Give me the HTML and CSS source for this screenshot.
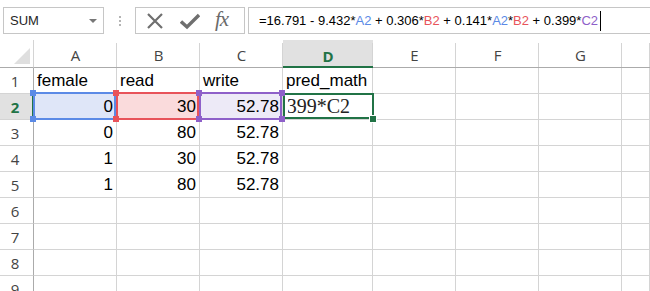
FILE: index.html
```html
<!DOCTYPE html>
<html lang="en">
<head>
    <meta charset="UTF-8">
    <title>Sheet</title>
    <link rel="stylesheet" href="styles.css">
</head>
<body>
    <!-- Formula bar -->
    <div class="formula-bar">
        <div class="name-box">
            <span>SUM</span>
            <span class="name-arrow"></span>
        </div>
        <div class="grip"><i></i><i></i><i></i></div>
        <div class="fx-buttons">
            <svg class="fx-icon" width="18" height="18" viewBox="0 0 18 18">
                <path d="M2 2 L16 16 M16 2 L2 16" stroke="#6f6f6f" stroke-width="2.2" fill="none"/>
            </svg>
            <svg class="fx-icon" width="20" height="18" viewBox="0 0 20 18">
                <path d="M1 9.5 L7 15 L19 3" stroke="#6f6f6f" stroke-width="3.4" fill="none"/>
            </svg>
            <span class="fx-label">fx</span>
        </div>
        <div class="formula-input">
            <span>=16.791 - 9.432*<b class="ref-a">A2</b> + 0.306*<b class="ref-b">B2</b> + 0.141*<b class="ref-a">A2</b>*<b class="ref-b">B2</b> + 0.399*<b class="ref-c">C2</b></span>
            <span class="caret"></span>
        </div>
    </div>

    <!-- Grid -->
    <div class="sheet">
        <div class="corner"><span class="corner-tri"></span></div>
        <div class="col-head">A</div>
        <div class="col-head">B</div>
        <div class="col-head">C</div>
        <div class="col-head active">D</div>
        <div class="col-head">E</div>
        <div class="col-head">F</div>
        <div class="col-head">G</div>
        <div class="col-head"></div>

        <div class="row-head">1</div>
        <div class="cell">female</div>
        <div class="cell">read</div>
        <div class="cell">write</div>
        <div class="cell">pred_math</div>
        <div class="cell"></div><div class="cell"></div><div class="cell"></div><div class="cell"></div>

        <div class="row-head active">2</div>
        <div class="cell num sel sel-a">0<span class="h tl"></span><span class="h tr"></span><span class="h bl"></span><span class="h br"></span></div>
        <div class="cell num sel sel-b">30<span class="h tl"></span><span class="h tr"></span><span class="h bl"></span><span class="h br"></span></div>
        <div class="cell num sel sel-c">52.78<span class="h tl"></span><span class="h tr"></span><span class="h bl"></span><span class="h br"></span></div>
        <div class="cell editing">
            <div class="edit-clip"><span class="edit-text">=16.791 - 9.432*A2 + 0.306*B2 + 0.141*A2*B2 + 0.399*C2</span></div>
            <span class="fill-handle"></span>
        </div>
        <div class="cell"></div><div class="cell"></div><div class="cell"></div><div class="cell"></div>

        <div class="row-head">3</div>
        <div class="cell num">0</div>
        <div class="cell num">80</div>
        <div class="cell num">52.78</div>
        <div class="cell"></div><div class="cell"></div><div class="cell"></div><div class="cell"></div><div class="cell"></div>

        <div class="row-head">4</div>
        <div class="cell num">1</div>
        <div class="cell num">30</div>
        <div class="cell num">52.78</div>
        <div class="cell"></div><div class="cell"></div><div class="cell"></div><div class="cell"></div><div class="cell"></div>

        <div class="row-head">5</div>
        <div class="cell num">1</div>
        <div class="cell num">80</div>
        <div class="cell num">52.78</div>
        <div class="cell"></div><div class="cell"></div><div class="cell"></div><div class="cell"></div><div class="cell"></div>

        <div class="row-head">6</div>
        <div class="cell"></div><div class="cell"></div><div class="cell"></div><div class="cell"></div><div class="cell"></div><div class="cell"></div><div class="cell"></div><div class="cell"></div>

        <div class="row-head">7</div>
        <div class="cell"></div><div class="cell"></div><div class="cell"></div><div class="cell"></div><div class="cell"></div><div class="cell"></div><div class="cell"></div><div class="cell"></div>

        <div class="row-head">8</div>
        <div class="cell"></div><div class="cell"></div><div class="cell"></div><div class="cell"></div><div class="cell"></div><div class="cell"></div><div class="cell"></div><div class="cell"></div>

        <div class="row-head">9</div>
        <div class="cell"></div><div class="cell"></div><div class="cell"></div><div class="cell"></div><div class="cell"></div><div class="cell"></div><div class="cell"></div><div class="cell"></div>
    </div>
</body>
</html>
```

FILE: styles.css
```css
* {
    margin: 0;
    padding: 0;
    box-sizing: border-box;
}

body {
    font-family: 'Liberation Sans', Arial, sans-serif;
    background: #ffffff;
    color: #000;
    width: 650px;
    height: 291px;
    overflow: hidden;
}

/* Formula bar */
.formula-bar {
    height: 40px;
    display: flex;
    align-items: flex-start;
    padding: 7px 0 0 3px;
}

.name-box {
    width: 101px;
    height: 27px;
    border: 1px solid #c6c6c6;
    display: flex;
    align-items: center;
    justify-content: space-between;
    padding: 0 6px 0 6px;
    font-size: 13px;
    color: #262626;
}

.name-arrow {
    width: 0;
    height: 0;
    border-left: 4px solid transparent;
    border-right: 4px solid transparent;
    border-top: 4px solid #777;
    margin-top: 1px;
}

.grip {
    width: 31px;
    height: 27px;
    display: flex;
    flex-direction: column;
    align-items: center;
    justify-content: center;
    gap: 2px;
}

.grip i {
    width: 2px;
    height: 2px;
    background: #b4b4b4;
}

.fx-buttons {
    width: 110px;
    height: 27px;
    border: 1px solid #c6c6c6;
    display: flex;
    align-items: center;
    padding-left: 10px;
    gap: 16px;
}

.fx-label {
    font-family: 'Liberation Serif', 'Times New Roman', serif;
    font-style: italic;
    font-size: 21px;
    color: #6a6a6a;
    margin-left: -1px;
    letter-spacing: -1px;
    line-height: 1;
    margin-top: -2px;
}

.formula-input {
    flex: 1;
    height: 27px;
    margin-left: 3px;
    border: 1px solid #c6c6c6;
    border-right: none;
    display: flex;
    align-items: center;
    padding-left: 10px;
    font-size: 13px;
    color: #000;
    white-space: nowrap;
}

.formula-input b {
    font-weight: normal;
}

.ref-a { color: #5b8ae6; }
.ref-b { color: #e8535a; }
.ref-c { color: #8e60c9; }

.caret {
    width: 1px;
    height: 20px;
    background: #000;
    margin-left: 2px;
}

/* Sheet grid */
.sheet {
    display: grid;
    grid-template-columns: 34px 83px 83px 83px 90px 83px 83px 83px 1fr;
    grid-template-rows: 28px repeat(9, 26px);
}

.corner {
    border-right: 1px solid #d4d4d4;
    border-bottom: 1px solid #ababab;
    position: relative;
}

.corner-tri {
    position: absolute;
    right: 3px;
    bottom: 3px;
    width: 0;
    height: 0;
    border-left: 16px solid transparent;
    border-bottom: 16px solid #dfdfdf;
}

.col-head {
    border-bottom: 1px solid #ababab;
    display: flex;
    align-items: center;
    justify-content: center;
    font-family: 'Open Sans', sans-serif;
    font-size: 15px;
    color: #444;
    padding-top: 3px;
    background: linear-gradient(#d4d4d4, #d4d4d4) right 3px / 1px 100% no-repeat;
}

.col-head.active {
    background-color: #e1e1e1;
    border-bottom: 2px solid #217346;
    color: #217346;
    font-weight: 700;
    padding-top: 5px;
}

.row-head {
    border-right: 1px solid #ababab;
    border-bottom: 1px solid #d4d4d4;
    display: flex;
    align-items: center;
    justify-content: center;
    font-family: 'Open Sans', sans-serif;
    font-size: 15px;
    color: #444;
    padding-right: 3px;
}

.row-head.active {
    background: #e1e1e1;
    border-right: 2px solid #217346;
    color: #217346;
    font-weight: 700;
    padding-right: 2px;
}

.cell {
    border-right: 1px solid #d4d4d4;
    border-bottom: 1px solid #d4d4d4;
    font-size: 17px;
    display: flex;
    align-items: flex-end;
    padding: 0 3px 2px 3px;
    white-space: nowrap;
    position: relative;
}

.cell.num {
    justify-content: flex-end;
}

/* Referenced ranges */
.sel::before {
    content: '';
    position: absolute;
    top: -2px;
    left: -1px;
    right: 0;
    bottom: -1px;
    border: 2px solid currentColor;
}

.sel-a { background: #dfe6f8; }
.sel-b { background: #fadbdc; }
.sel-c { background: #edeaf7; }

.sel-a::before { border-color: #5b8ae6; }
.sel-b::before { border-color: #e8535a; }
.sel-c::before { border-color: #8e60c9; }

.h {
    position: absolute;
    width: 6px;
    height: 6px;
    z-index: 2;
}

.sel-a .h { background: #5b8ae6; }
.sel-b .h { background: #e8535a; }
.sel-c .h { background: #8e60c9; }

.h.tl { left: -4px; top: -4px; }
.h.tr { right: -3px; top: -4px; }
.h.bl { left: -4px; bottom: -3px; }
.h.br { right: -3px; bottom: -3px; }

.sel-b .h.tl, .sel-b .h.bl,
.sel-c .h.tl, .sel-c .h.bl {
    z-index: 3;
}

/* Cell being edited */
.editing {
    border-right: none;
    padding: 0 0 1px 0;
}

.editing::before {
    content: '';
    position: absolute;
    top: -1px;
    left: 0;
    right: -1px;
    bottom: 0;
    border: 2px solid #217346;
}

.edit-clip {
    flex: 1;
    min-width: 0;
    display: flex;
    justify-content: flex-end;
    overflow: hidden;
    margin-left: 5px;
    padding-right: 23px;
}

.edit-text {
    font-family: 'Liberation Serif', 'Times New Roman', serif;
    font-size: 20px;
    color: #222;
    flex-shrink: 0;
}

.fill-handle {
    position: absolute;
    right: -3px;
    bottom: -3px;
    width: 6px;
    height: 6px;
    background: #217346;
    outline: 1px solid #fff;
    z-index: 2;
}
```
